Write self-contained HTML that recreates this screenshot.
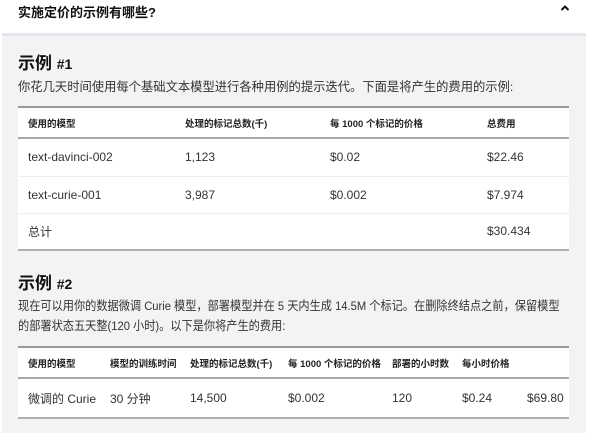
<!DOCTYPE html>
<html><head><meta charset="utf-8"><style>
*{margin:0;padding:0;box-sizing:border-box}
body{width:600px;height:418px;overflow:hidden;background:#fff;font-family:"Liberation Sans","Noto Sans CJK SC",sans-serif;color:#222;position:relative}
.q{position:absolute;left:18px;top:2px;font-size:13px;font-weight:bold;color:#111}
.chev{position:absolute;left:559px;top:3px}
.panel{position:absolute;left:2px;top:33px;width:584px;height:400px;background:#f2f3f5;border-top:3px solid #e4e5e8}
h2{position:absolute;left:18px;font-size:17px;font-weight:bold;color:#111}
h2 span{font-size:14px}
p{position:absolute;left:18px;font-size:12.3px;line-height:19.5px;color:#333;white-space:nowrap;transform-origin:left top}
table{position:absolute;left:18px;width:551px;background:#fff;border-collapse:collapse;border-top:2px solid #9a9a9a;border-bottom:2px solid #b0b0b0}
th{font-size:9.5px;font-weight:bold;text-align:left;height:31px;border-bottom:2px solid #a8a8a8;padding-left:10px;color:#222}
td{font-size:12px;text-align:left;padding-left:10px;border-bottom:1px solid #eee;color:#333}
</style></head><body>
<div class="q">实施定价的示例有哪些?</div>
<svg class="chev" width="12" height="10" viewBox="0 0 12 10"><path d="M2.5 7 L6 3.5 L9.5 7" stroke="#111" stroke-width="2" fill="none"/></svg>
<div class="panel"></div>
<h2 style="top:49px">示例 <span>#1</span></h2>
<p style="top:78px">你花几天时间使用每个基础文本模型进行各种用例的提示迭代。下面是将产生的费用的示例:</p>
<table style="top:106px">
<tr><th style="width:157px">使用的模型</th><th style="width:145px">处理的标记总数(千)</th><th style="width:157px">每 1000 个标记的价格</th><th>总费用</th></tr>
<tr style="height:38px"><td>text-davinci-002</td><td>1,123</td><td>$0.02</td><td>$22.46</td></tr>
<tr style="height:37px"><td>text-curie-001</td><td>3,987</td><td>$0.002</td><td>$7.974</td></tr>
<tr style="height:37px"><td>总计</td><td></td><td></td><td>$30.434</td></tr>
</table>
<h2 style="top:269px">示例 <span>#2</span></h2>
<p style="top:297px;transform:scaleX(0.91)">现在可以用你的数据微调 Curie 模型，部署模型并在 5 天内生成 14.5M 个标记。在删除终结点之前，保留模型<br>的部署状态五天整(120 小时)。以下是你将产生的费用:</p>
<table style="top:346px">
<tr><th style="width:82px">使用的模型</th><th style="width:80px">模型的训练时间</th><th style="width:98px">处理的标记总数(千)</th><th style="width:104px">每 1000 个标记的价格</th><th style="width:70px">部署的小时数</th><th style="width:65px">每小时价格</th><th></th></tr>
<tr style="height:40px"><td>微调的 Curie</td><td>30 分钟</td><td>14,500</td><td>$0.002</td><td>120</td><td>$0.24</td><td>$69.80</td></tr>
</table>
</body></html>
